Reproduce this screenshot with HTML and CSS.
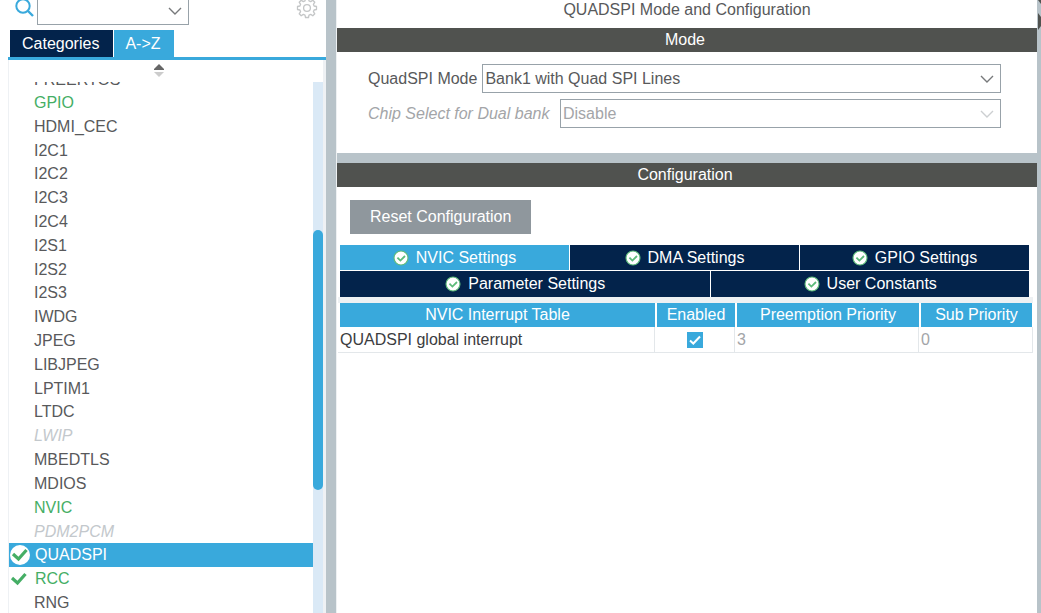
FILE: index.html
```html
<!DOCTYPE html>
<html lang="en">
<head>
<meta charset="utf-8">
<title>QUADSPI Mode and Configuration</title>
<link rel="stylesheet" href="styles.css">
</head>
<body>
<svg class="defs" aria-hidden="true">
  <symbol id="chevron" viewBox="0 0 14 8"><path d="M1 1l6 6 6-6" fill="none" stroke="currentColor" stroke-width="1.4"/></symbol>
  <symbol id="status-ok" viewBox="0 0 16 16">
    <circle cx="8" cy="8" r="7" fill="#fff" stroke="#5dbb7a" stroke-width="1.1"/>
    <path d="M4.4 7.6l3 3 4.6-4.6" fill="none" stroke="#5dbb7a" stroke-width="1.8"/>
  </symbol>
</svg>
<div class="app">
  <aside class="sidebar">
    <div class="search">
      <svg class="search-icon" viewBox="0 0 20 20" aria-hidden="true"><circle cx="8" cy="8" r="6.7" fill="none" stroke="#39a9dc" stroke-width="2"/><path d="M13 13l5 5" stroke="#39a9dc" stroke-width="2.4"/></svg>
      <div class="combo search-combo">
        <select aria-label="Search peripherals"><option></option></select>
        <svg class="chevron"><use href="#chevron"/></svg>
      </div>
      <button class="gear" aria-label="Settings">
        <svg viewBox="0 0 22 22" fill="none" stroke="#c4c6c7">
          <circle cx="11" cy="11" r="3.4" stroke-width="1.3"/>
          <path stroke-width="1.3" stroke-linejoin="round" d="M9.5 1.5h3l.5 2.4 1.7.7 2.1-1.4 2 2-1.4 2.1.7 1.7 2.4.5v3l-2.4.5-.7 1.7 1.4 2.1-2 2-2.1-1.4-1.7.7-.5 2.4h-3L9 18.100l-1.7-.7-2.100 1.400-2-2 1.400-2.100-.7-1.700-2.400-.5v-3l2.400-.5.7-1.700-1.400-2.100 2-2 2.100 1.400 1.700-.7z"/>
        </svg>
      </button>
    </div>
    <div class="side-tabs" role="tablist">
      <button class="side-tab" role="tab">Categories</button>
      <button class="side-tab active" role="tab" aria-selected="true">A-&gt;Z</button>
    </div>
    <div class="side-body">
      <button class="sorter" aria-label="Sort">
        <svg viewBox="0 0 10 13"><path d="M5 0l5 5v1H0V5z" fill="#666"/><path d="M0 8h10L5 13z" fill="#ccc"/></svg>
      </button>
      <div class="list-area">
        <ul class="list">
          <li class="cut"><span>FREERTOS</span></li>
          <li class="on">GPIO</li>
          <li>HDMI_CEC</li>
          <li>I2C1</li>
          <li>I2C2</li>
          <li>I2C3</li>
          <li>I2C4</li>
          <li>I2S1</li>
          <li>I2S2</li>
          <li>I2S3</li>
          <li>IWDG</li>
          <li>JPEG</li>
          <li>LIBJPEG</li>
          <li>LPTIM1</li>
          <li>LTDC</li>
          <li class="off">LWIP</li>
          <li>MBEDTLS</li>
          <li>MDIOS</li>
          <li class="on">NVIC</li>
          <li class="off">PDM2PCM</li>
          <li class="selected"><svg class="mark" viewBox="0 0 20 20"><circle cx="10" cy="10" r="10" fill="#fff"/><path d="M3 9l5.500 5 8-9" fill="none" stroke="#45ae65" stroke-width="3.200"/></svg>QUADSPI</li>
          <li class="on"><svg class="mark" viewBox="0 0 20 20"><path d="M2 9l5.500 5 8-9" fill="none" stroke="#45ae65" stroke-width="3.200"/></svg>RCC</li>
          <li>RNG</li>
        </ul>
        <div class="scrollbar"><div class="thumb"></div></div>
      </div>
    </div>
  </aside>
  <div class="splitter"></div>
  <main class="main">
    <section class="mode">
      <h1 class="title">QUADSPI Mode and Configuration</h1>
      <h2 class="band">Mode</h2>
      <div class="fields">
        <div class="field">
          <label for="qmode">QuadSPI Mode</label>
          <div class="combo"><select id="qmode"><option>Bank1 with Quad SPI Lines</option></select><svg class="chevron"><use href="#chevron"/></svg></div>
        </div>
        <div class="field disabled">
          <label for="chip">Chip Select for Dual bank</label>
          <div class="combo"><select id="chip" disabled><option>Disable</option></select><svg class="chevron"><use href="#chevron"/></svg></div>
        </div>
      </div>
    </section>
    <section class="config">
      <h2 class="band">Configuration</h2>
      <button class="reset">Reset Configuration</button>
      <div class="tabs" role="tablist">
        <div class="tab-row">
          <button class="tab active" role="tab" aria-selected="true"><svg class="ok"><use href="#status-ok"/></svg>NVIC Settings</button>
          <button class="tab" role="tab"><svg class="ok"><use href="#status-ok"/></svg>DMA Settings</button>
          <button class="tab" role="tab"><svg class="ok"><use href="#status-ok"/></svg>GPIO Settings</button>
        </div>
        <div class="tab-row">
          <button class="tab wide" role="tab"><svg class="ok"><use href="#status-ok"/></svg>Parameter Settings</button>
          <button class="tab" role="tab"><svg class="ok"><use href="#status-ok"/></svg>User Constants</button>
        </div>
      </div>
      <div class="table-pane">
        <table>
          <colgroup><col><col class="c-enabled"><col class="c-preempt"><col class="c-sub"></colgroup>
          <thead><tr><th>NVIC Interrupt Table</th><th>Enabled</th><th>Preemption Priority</th><th>Sub Priority</th></tr></thead>
          <tbody><tr>
            <td class="name">QUADSPI global interrupt</td>
            <td><label class="check"><input type="checkbox" checked aria-label="Enable QUADSPI global interrupt"><svg viewBox="0 0 16 16"><path d="M3 8.5l3.3 3L13 4.5" fill="none" stroke="#fff" stroke-width="2"/></svg></label></td>
            <td>3</td>
            <td>0</td>
          </tr></tbody>
        </table>
      </div>
    </section>
  </main>
  <div class="edge">
    <svg viewBox="0 0 4 30"><path d="M4 0v4L1 0z" fill="#50524f"/><path d="M1 13l3 4v9l-3 4z" fill="#50524f"/></svg>
  </div>
</div>
</body>
</html>
```
FILE: styles.css
```css
* { box-sizing: border-box; }

body {
  margin: 0;
  font: 16px/24px "Liberation Sans", Arial, sans-serif;
  color: #58595b;
  background: #fff;
}

button, select { font: inherit; color: inherit; border: 0; border-radius: 0; margin: 0; padding: 0; }
h1, h2, ul { margin: 0; padding: 0; font-size: inherit; font-weight: normal; }
svg { display: block; }
.defs { position: absolute; width: 0; height: 0; }

.app {
  display: grid;
  grid-template-columns: 326px 11px minmax(0, 1fr) 4px;
  height: 100vh;
  overflow: hidden;
}

/* Sidebar */
.sidebar { display: flex; flex-direction: column; min-height: 0; padding-left: 8px; }
.search { display: flex; height: 30px; padding: 0 8px 0 7px; }
.search-icon { width: 20px; height: 20px; flex: none; margin-top: -2px; }
.search-combo { flex: 0 0 152px; height: 28px; margin: -4px 0 0 2px; }
.gear { width: 22px; height: 22px; margin: -3px 0 0 auto; background: none; }

.side-tabs { display: flex; gap: 1px; padding-left: 2px; border-bottom: 3px solid #39a9dc; }
.side-tab { height: 27px; padding: 0 14px 0 12px; background: #03234b; color: #fff; }
.side-tab.active { background: #39a9dc; padding: 0 13px 0 11px; }

.side-body {
  flex: 1;
  display: flex;
  flex-direction: column;
  min-height: 0;
  border: solid #eef1f4;
  border-width: 0 3px 0 1px;
}
.sorter { display: flex; justify-content: center; height: 22px; padding: 4px 14px 0 0; background: none; }
.sorter svg { width: 10px; height: 13px; }

.list-area { flex: 1; display: flex; min-height: 0; }
.list {
  flex: 1;
  display: flex;
  flex-direction: column;
  margin-bottom: -2px;
  list-style: none;
  line-height: 22px;
  overflow: hidden;
}
.list li {
  flex: 1 0 22px;
  display: flex;
  align-items: center;
  padding-left: 25px;
}
.list .cut { flex: 0 0 9px; align-items: flex-end; overflow: hidden; }
.list .on { color: #45ae65; }
.list .off { color: #c3c8cc; font-style: italic; }
.list .selected { background: #39a9dc; color: #fff; }
.list li:has(.mark) { gap: 5px; padding-left: 1px; }
.mark { width: 20px; height: 20px; flex: none; }
.scrollbar { width: 10px; padding-top: 148px; background: #dae9f6; }
.thumb { height: 260px; border-radius: 5px; background: #39a9dc; }

.splitter { background: #b8c3c9; border-right: 1px solid #edf0f2; }

/* Main */
.main { display: flex; flex-direction: column; gap: 10px; background: #b8c3c9; }
.mode, .config { background: #fff; }
.title { height: 28px; line-height: 20px; text-align: center; }
.band { height: 24px; background: #50524f; color: #fff; text-align: center; padding-right: 4px; }
.fields { display: flex; flex-direction: column; gap: 6px; padding: 12px 36px 25px 31px; }
.field { display: flex; align-items: center; gap: 5px; }
.field .combo { flex: 1; }
.disabled { color: #a3a5a8; }
.disabled label { min-width: 187px; font-style: italic; }

.combo { display: grid; height: 29px; border: 1px solid #98a2a9; align-items: center; }
.combo > * { grid-area: 1 / 1; }
.combo select { width: 100%; height: 100%; padding: 0 2px; appearance: none; background: none; opacity: 1; }
.chevron { width: 14px; height: 8px; justify-self: end; margin-right: 6px; color: #77797b; pointer-events: none; }
.disabled .chevron { color: #cccfd1; }

.config { flex: 1; display: flex; flex-direction: column; align-items: flex-start; }
.config .band { align-self: stretch; }
.reset { height: 34px; margin: 13px 13px 11px; padding: 0 20px; background: #8f979d; color: #fff; }

.tabs { align-self: stretch; display: flex; flex-direction: column; gap: 1px; margin: 0 8px 0 3px; }
.tab-row { display: flex; gap: 1px; }
.tab {
  flex: 1;
  display: flex;
  align-items: center;
  justify-content: center;
  gap: 7px;
  height: 25px;
  background: #03234b;
  color: #fff;
}
.tab-row:last-child .tab { flex: 6; height: 26px; }
.tab-row:last-child .wide { flex: 7; }
.tab.active { background: #39a9dc; }
.ok { width: 16px; height: 16px; }

.table-pane { align-self: stretch; flex: 1; margin: 0 4px 0 1px; border-top: 6px solid #eef1f3; }
table { width: 100%; table-layout: fixed; border-collapse: separate; border-spacing: 0; }
.c-enabled { width: 80px; }
.c-preempt { width: 184px; }
.c-sub { width: 114px; }
th { height: 24px; padding: 0; font-weight: normal; background: #39a9dc; color: #fff; border: solid #fff; border-width: 0 0 0 2px; }
th:last-child { border-right-width: 1px; }
td { height: 26px; padding: 0 2px; color: #a3a5a8; border: solid #e3e7ea; border-width: 0 1px 1px 0; }
td.name { color: #3c3d3f; }
.check { display: grid; width: 16px; height: 16px; margin: 0 auto; }
.check > * { grid-area: 1 / 1; }
.check input { appearance: none; width: 16px; height: 16px; margin: 0; background: #39a9dc; }
.check svg { pointer-events: none; }

.edge { background: #b8c3c9; }
.edge svg { width: 4px; height: 30px; }
```
